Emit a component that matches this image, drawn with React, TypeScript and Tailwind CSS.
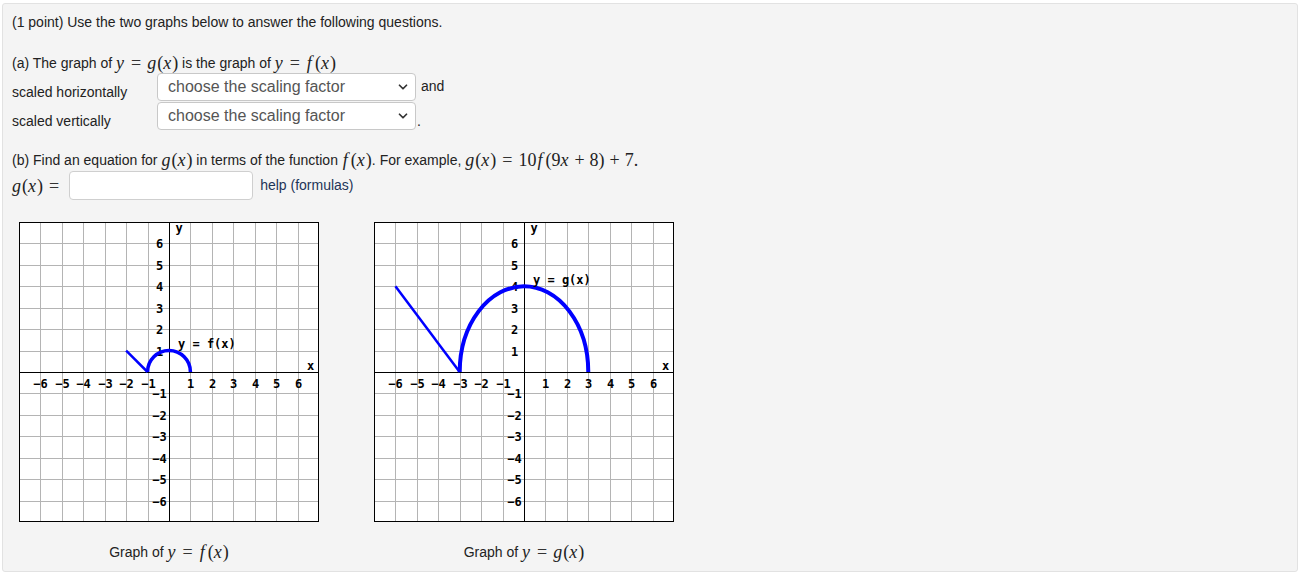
import { ChevronDown } from "lucide-react"

const U = 300 / 14
const px = (x: number) => (x + 7) * U
const py = (y: number) => (7 - y) * U
const grid = (v: number) => Math.round((v + 7) * U) + 0.5

function V({ children }: { children: React.ReactNode }) {
  return <span className={children === "f" ? "pl-[1px] pr-[3px] italic" : "pr-[1px] italic"}>{children}</span>
}

// small inline math in a serif face, the way MathJax lays it out
function Eq({ parts }: { parts: (string | [string])[] }) {
  return (
    <span className="font-['Liberation_Serif',serif] text-[18px] leading-none">
      {parts.map((p, i) =>
        Array.isArray(p) ? (
          <V key={i}>{p[0]}</V>
        ) : p === "=" || p === "+" ? (
          <span key={i} className={p === "=" ? "mx-[6px] text-[#333]" : "mx-[5px]"}>
            {p}
          </span>
        ) : (
          <span key={i}>{p}</span>
        )
      )}
    </span>
  )
}

function FakeSelect() {
  return (
    <div className="flex h-[28px] w-[259px] items-center justify-between rounded-[4px] border border-[#c8c8c8] bg-white pl-[10px] pr-[5px] text-[16px] text-[#555]">
      <span>choose the scaling factor</span>
      <ChevronDown size={14} strokeWidth={3} className="text-[#333]" />
    </div>
  )
}

type GraphProps = {
  label: string
  labelY: number
  children: React.ReactNode
}

function Graph({ label, labelY, children }: GraphProps) {
  const ticks = [-6, -5, -4, -3, -2, -1, 1, 2, 3, 4, 5, 6]
  const font = "'DejaVu Sans Mono', monospace"
  const fmt = (t: number) => (t < 0 ? "\u2212" + -t : String(t))
  return (
    <svg width={300} height={300} className="block bg-white">
      {ticks.concat([0]).map(t => (
        <g key={t} stroke="#b4b4b4" strokeWidth={1}>
          <line x1={grid(t)} y1={0} x2={grid(t)} y2={300} />
          <line x1={0} y1={grid(t)} x2={300} y2={grid(t)} />
        </g>
      ))}
      <line x1={grid(0)} y1={0} x2={grid(0)} y2={300} stroke="#000" />
      <line x1={0} y1={grid(0)} x2={300} y2={grid(0)} stroke="#000" />
      <rect x={0.5} y={0.5} width={299} height={299} fill="none" stroke="#000" />

      <g fontFamily={font} fontSize={12} fontWeight="bold" fill="#000">
        {ticks.map(t => (
          <text key={"x" + t} x={grid(t)} y={166} textAnchor="middle">
            {fmt(t)}
          </text>
        ))}
        {ticks.map(t => (
          <text key={"y" + t} x={grid(0) - 10} y={grid(-t) + 4} textAnchor="middle">
            {fmt(t)}
          </text>
        ))}
        <text x={grid(0) + 6} y={10}>y</text>
        <text x={288} y={148}>x</text>
      </g>

      {children}

      <text
        x={px(0.42)}
        y={labelY}
        fontFamily={font}
        fontSize={12}
        fontWeight="bold"
        fill="#000"
      >
        {label}
      </text>
    </svg>
  )
}

export default function App() {
  const blue = "#0000ff"
  return (
    <div className="h-[573px] w-[1300px] bg-white pl-[2px] pt-[3px] font-['Liberation_Sans',Arial,sans-serif] text-[14px] text-[#222]">
      <div className="h-[569px] w-[1296px] rounded-[3px] border border-[#e2e2e2] bg-[#f4f4f4] pl-[9px] pt-[8px]">
        <div className="flex h-5 items-center">
          (1 point) Use the two graphs below to answer the following questions.
        </div>

        <div className="mt-[21px] flex h-5 items-center whitespace-pre">
          (a) The graph of <Eq parts={[["y"], "=", ["g"], "(", ["x"], ")"]} /> is the graph of{" "}
          <Eq parts={[["y"], "=", ["f"], "(", ["x"], ")"]} />
        </div>

        <div className="flex h-[28px]">
          <div className="mt-[9px] w-[145px] leading-5">scaled horizontally</div>
          <FakeSelect />
          <div className="ml-[5px] pt-[3px] leading-5">and</div>
        </div>
        <div className="mt-[1px] flex h-[28px]">
          <div className="mt-[9px] w-[145px] leading-5">scaled vertically</div>
          <FakeSelect />
          <div className="ml-[1px] pt-[9px] leading-5">.</div>
        </div>

        <div className="mt-[20px] flex h-5 items-center whitespace-pre">
          (b) Find an equation for <Eq parts={[["g"], "(", ["x"], ")"]} /> in terms of the function{" "}
          <Eq parts={[["f"], "(", ["x"], ")"]} />. For example,{" "}
          <Eq
            parts={[["g"], "(", ["x"], ")", "=", "10", ["f"], "(9", ["x"], "+", "8)", "+", "7."]}
          />
        </div>

        <div className="mt-[1px] flex h-[29px] items-center">
          <Eq parts={[["g"], "(", ["x"], ")", "="]} />
          <div className="ml-[4px] h-[29px] w-[184px] rounded-[4px] border border-[#cfcfcf] bg-white" />
          <span className="ml-[7px] text-[#1d3557]">help (formulas)</span>
        </div>

        <div className="mt-[22px] ml-[7px] flex gap-[55px]">
          <Graph label="y = f(x)" labelY={py(1.31) + 4}>
            <line x1={px(-2)} y1={py(1)} x2={px(-1)} y2={py(0)} stroke={blue} strokeWidth={2.5} />
            <path
              d={`M ${px(-1)} ${py(0)} A ${U} ${U} 0 0 1 ${px(1)} ${py(0)}`}
              fill="none"
              stroke={blue}
              strokeWidth={3.5}
            />
          </Graph>
          <Graph label="y = g(x)" labelY={py(4.28) + 4}>
            <line x1={px(-6)} y1={py(4)} x2={px(-3)} y2={py(0)} stroke={blue} strokeWidth={2.5} />
            <path
              d={`M ${px(-3)} ${py(0)} A ${3 * U} ${4 * U} 0 0 1 ${px(3)} ${py(0)}`}
              fill="none"
              stroke={blue}
              strokeWidth={4}
            />
          </Graph>
        </div>

        <div className="mt-[20px] ml-[7px] flex gap-[55px]">
          <div className="flex h-5 w-[300px] items-center justify-center whitespace-pre">
            Graph of <Eq parts={[["y"], "=", ["f"], "(", ["x"], ")"]} />
          </div>
          <div className="flex h-5 w-[300px] items-center justify-center whitespace-pre">
            Graph of <Eq parts={[["y"], "=", ["g"], "(", ["x"], ")"]} />
          </div>
        </div>
      </div>
    </div>
  )
}
